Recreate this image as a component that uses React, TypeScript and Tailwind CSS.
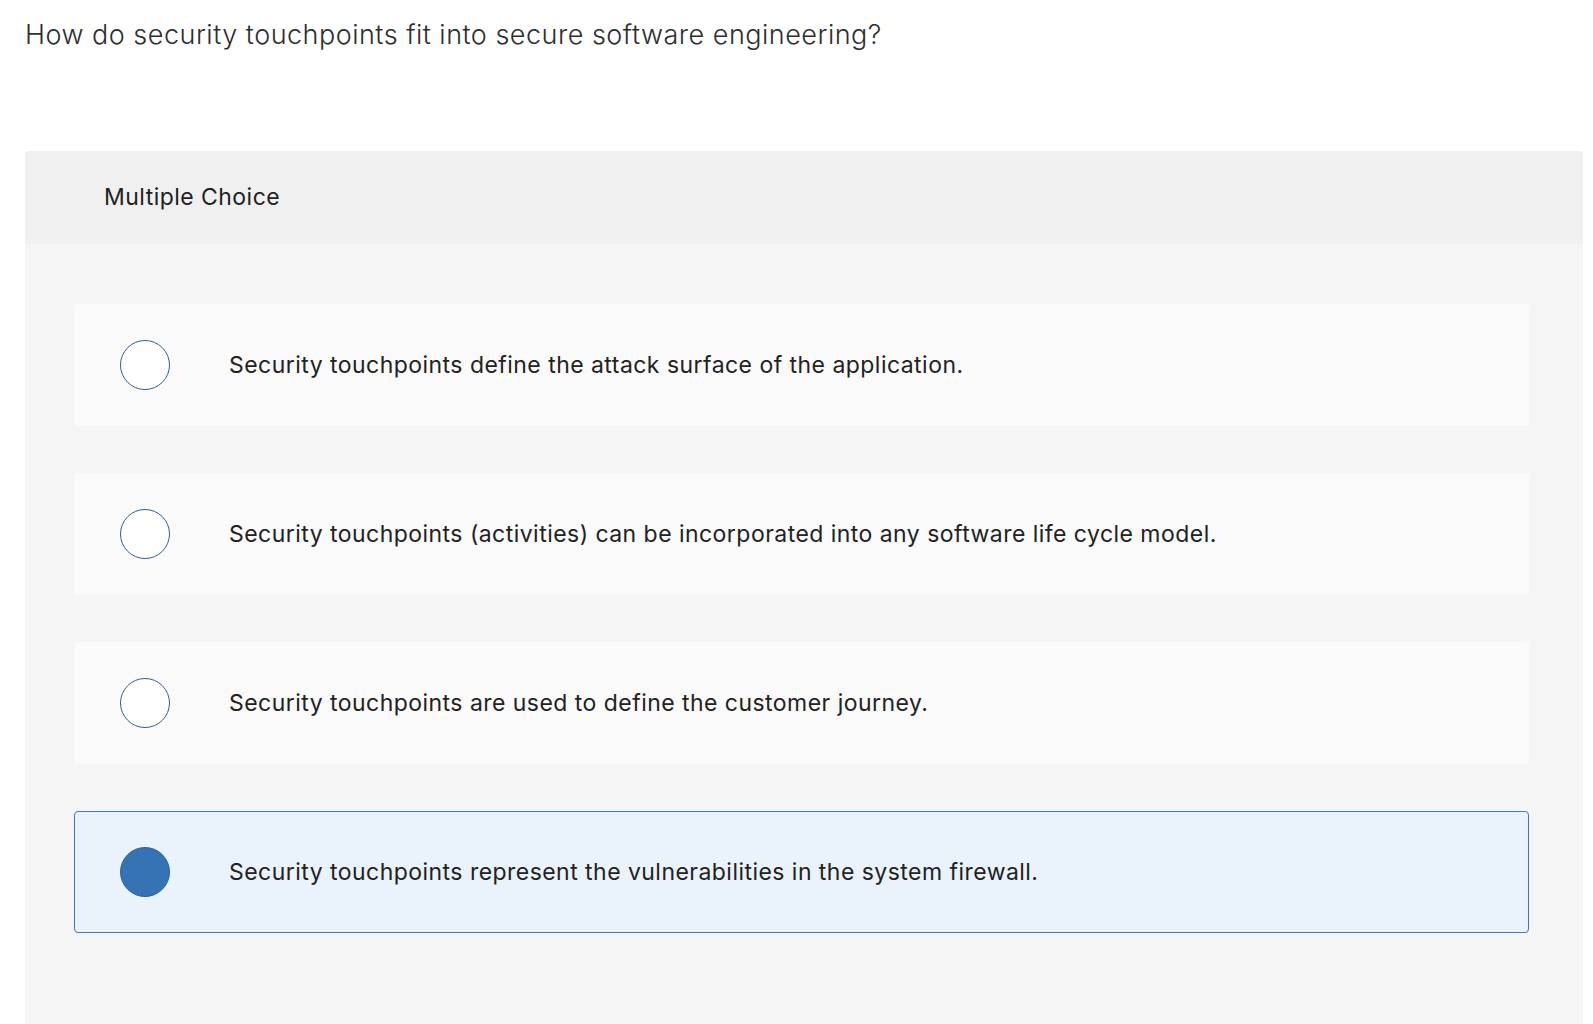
interface Choice {
    id: number;
    label: string;
}

const choices: Choice[] = [
    { id: 1, label: "Security touchpoints define the attack surface of the application." },
    { id: 2, label: "Security touchpoints (activities) can be incorporated into any software life cycle model." },
    { id: 3, label: "Security touchpoints are used to define the customer journey." },
    { id: 4, label: "Security touchpoints represent the vulnerabilities in the system firewall." },
];

const selectedId = 4;

const ChoiceRow = ({ choice, selected }: { choice: Choice; selected: boolean }) => {
    return (
        <div
            className={
                selected
                    ? "flex h-[122px] items-center rounded-[4px] border border-[#3b78c4] bg-[#eaf2fb] pl-[45px]"
                    : "flex h-[122px] items-center rounded-[4px] border border-transparent bg-[#fafafa] pl-[45px]"
            }
        >
            <span
                className={
                    selected
                        ? "h-[50px] w-[50px] shrink-0 rounded-full border-[1.5px] border-[#2c63a0] bg-[#3573b5]"
                        : "h-[50px] w-[50px] shrink-0 rounded-full border-[1.5px] border-[#2f5e91] bg-white"
                }
            />
            <span className="ml-[59px] pt-px text-[23px] tracking-[0.02em] text-[#222222]">{choice.label}</span>
        </div>
    );
};

export default function App() {
    return (
        <div className="min-h-screen bg-white font-['Inter','Liberation_Sans',sans-serif]">
            <h1 className="pl-[25px] pt-[17px] text-[27px] leading-[36px] tracking-[0.018em] font-light text-[#2e2e2e]">
                How do security touchpoints fit into secure software engineering?
            </h1>

            <div className="ml-[25px] mr-[10px] mt-[98px] rounded-t-[4px] bg-[#f5f5f5]">
                <div className="flex h-[93px] items-center rounded-t-[4px] bg-[#f0f0f0] pl-[79px]">
                    <span className="text-[23px] tracking-[0.02em] text-[#222222]">Multiple Choice</span>
                </div>
                <div className="flex flex-col gap-[47px] pl-[49px] pr-[54px] pt-[60px] pb-[100px]">
                    {choices.map((c) => (
                        <ChoiceRow key={c.id} choice={c} selected={c.id === selectedId} />
                    ))}
                </div>
            </div>
        </div>
    );
}
